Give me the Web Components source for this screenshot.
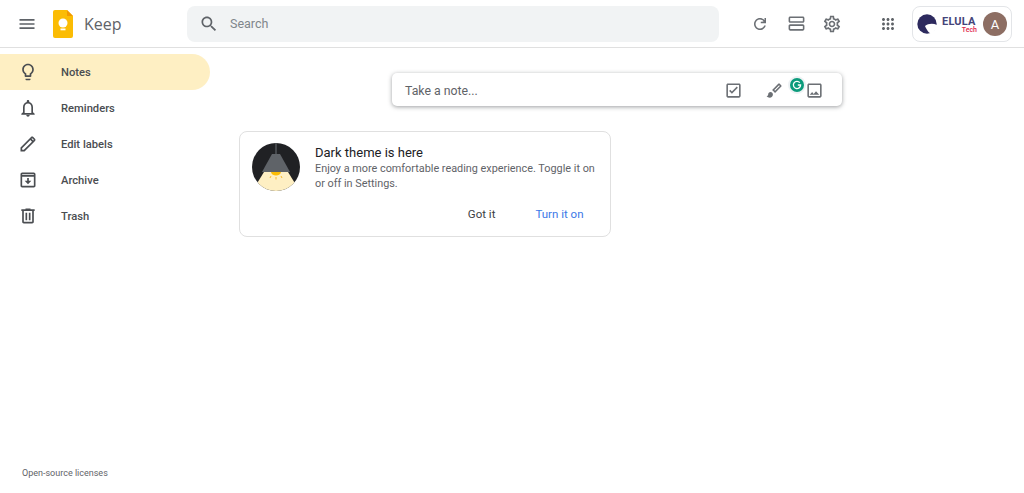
<!DOCTYPE html>
<html>
<head>
<meta charset="utf-8">
<title>Keep</title>
<style>
  html, body { margin: 0; height: 100%; background: #fff; }
  body { font-family: Roboto, "Liberation Sans", sans-serif; overflow: hidden; }
</style>
</head>
<body>
<keep-app>
  <keep-header slot="header"></keep-header>
  <keep-sidebar slot="side">
    <nav-item label="Notes" icon="bulb" active></nav-item>
    <nav-item label="Reminders" icon="bell"></nav-item>
    <nav-item label="Edit labels" icon="pencil"></nav-item>
    <nav-item label="Archive" icon="archive"></nav-item>
    <nav-item label="Trash" icon="trash"></nav-item>
  </keep-sidebar>
  <note-bar></note-bar>
  <theme-card></theme-card>
</keep-app>

<script>
const ICONS = {
  bulb: '<path d="M9 21c0 .5.4 1 1 1h4c.6 0 1-.5 1-1v-1H9v1zm3-19C8.100 2 5 5.100 5 9c0 2.400 1.200 4.500 3 5.700V17c0 .5.4 1 1 1h6c.6 0 1-.5 1-1v-2.300c1.800-1.300 3-3.400 3-5.700 0-3.900-3.100-7-7-7zm2.900 11.100-.9.6V16h-4v-2.300l-.9-.6C7.800 12.200 7 10.700 7 9c0-2.800 2.200-5 5-5s5 2.200 5 5c0 1.700-.8 3.200-2.100 4.100z"/>',
  bell: '<path d="M18 17v-6c0-3.100-1.600-5.600-4.500-6.300V4c0-.8-.7-1.500-1.500-1.500s-1.500.7-1.500 1.500v.7C7.600 5.400 6 7.900 6 11v6l-2 2v1h16v-1l-2-2zm-2 1H8v-7c0-2.500 1.500-4.500 4-4.500s4 2 4 4.500v7zm-4 4.500c1.100 0 2-.9 2-2h-4c0 1.100.9 2 2 2z"/>',
  pencil: '<path d="M20.400 5.600 18.400 3.600c-.8-.8-2-.8-2.800 0L3 16.200V21h4.800L20.400 8.400c.8-.8.8-2 0-2.800zM7 19H5v-2L14.800 7.200l2 2L7 19zM18.200 7.800l-2-2L17 5l2 2-.8.8z"/>',
  archive: '<path d="M19 3H5c-1.100 0-2 .9-2 2v14c0 1.100.9 2 2 2h14c1.100 0 2-.9 2-2V5c0-1.100-.9-2-2-2zm0 16H5V8h14v11zM5 6V5h14v1H5zm6 3.500v3.500H8l4 4 4-4h-3V9.500h-2z"/>',
  trash: '<path d="M15 4V3H9v1H4v2h1v13c0 1.100.9 2 2 2h10c1.100 0 2-.9 2-2V6h1V4h-5zm2 15H7V6h10v13zM9 8h2v9H9V8zm4 0h2v9h-2V8z"/>',
  menu: '<path d="M3 18h18v-2H3v2zm0-5h18v-2H3v2zm0-7v2h18V6H3z"/>',
  search: '<path d="M15.500 14h-.8l-.3-.3c1-1.100 1.600-2.600 1.600-4.200C16 5.900 13.100 3 9.500 3S3 5.900 3 9.500 5.900 16 9.500 16c1.600 0 3.100-.6 4.200-1.600l.3.3v.8l5 5 1.500-1.500-5-5zm-6 0C7 14 5 12 5 9.500S7 5 9.500 5 14 7 14 9.500 12 14 9.500 14z"/>',
  refresh: '<path d="M13 9v2h7V4h-2v2.900C16.500 5.100 14.400 4 12 4c-4.400 0-8 3.600-8 8s3.600 8 8 8c3.700 0 6.800-2.500 7.700-6h-2.100c-.8 2.300-3 4-5.600 4-3.300 0-6-2.700-6-6s2.700-6 6-6c2 0 3.700 1 4.800 2.500L13 9z"/>',
  rows: '<path d="M20 3H4c-1.100 0-2 .9-2 2v4c0 1.100.9 2 2 2h16c1.100 0 2-.9 2-2V5c0-1.100-.9-2-2-2zm0 6H4V5h16v4zm0 4H4c-1.100 0-2 .9-2 2v4c0 1.100.9 2 2 2h16c1.100 0 2-.9 2-2v-4c0-1.100-.9-2-2-2zm0 6H4v-4h16v4z"/>',
  gear: '<path d="M19.430 12.980c.04-.32.07-.64.07-.98 0-.34-.03-.66-.07-.98l2.110-1.650c.19-.15.24-.42.12-.64l-2-3.460c-.09-.16-.26-.25-.44-.25-.06 0-.12.01-.17.03l-2.490 1c-.52-.4-1.080-.73-1.690-.98l-.38-2.650C14.460 2.180 14.250 2 14 2h-4c-.25 0-.46.18-.49.42l-.38 2.650c-.61.25-1.170.59-1.690.98l-2.490-1c-.06-.02-.12-.03-.18-.03-.17 0-.34.09-.43.25l-2 3.460c-.13.22-.07.49.12.64l2.110 1.650c-.04.32-.07.65-.07.98 0 .33.03.66.07.98l-2.110 1.650c-.19.15-.24.42-.12.64l2 3.460c.09.16.26.25.44.25.06 0 .12-.01.17-.03l2.490-1c.52.4 1.080.73 1.690.98l.38 2.650c.03.24.24.42.49.42h4c.25 0 .46-.18.49-.42l.38-2.650c.61-.25 1.170-.59 1.690-.98l2.490 1c.06.02.12.03.18.03.17 0 .34-.09.43-.25l2-3.460c.12-.22.07-.49-.12-.64l-2.110-1.650zm-1.980-1.710c.04.31.05.52.05.73 0 .21-.02.43-.05.73l-.14 1.130.89.7 1.080.84-.7 1.210-1.270-.51-1.040-.42-.9.68c-.43.32-.84.56-1.250.73l-1.060.43-.16 1.130-.2 1.350h-1.400l-.19-1.350-.16-1.130-1.060-.43c-.43-.18-.83-.41-1.230-.71l-.91-.7-1.060.43-1.270.51-.7-1.210 1.080-.84.89-.7-.14-1.130c-.03-.31-.05-.54-.05-.74s.02-.43.05-.73l.14-1.130-.89-.7-1.080-.84.7-1.210 1.270.51 1.040.42.9-.68c.43-.32.84-.56 1.250-.73l1.060-.43.16-1.130.2-1.350h1.390l.19 1.350.16 1.130 1.060.43c.43.18.83.41 1.230.71l.91.7 1.060-.43 1.270-.51.7 1.210-1.070.85-.89.7.14 1.130zM12 8c-2.210 0-4 1.790-4 4s1.790 4 4 4 4-1.790 4-4-1.790-4-4-4zm0 6c-1.100 0-2-.9-2-2s.9-2 2-2 2 .9 2 2-.9 2-2 2z"/>',
  apps: '<path d="M6 8c1.100 0 2-.9 2-2s-.9-2-2-2-2 .9-2 2 .9 2 2 2zm6 12c1.100 0 2-.9 2-2s-.9-2-2-2-2 .9-2 2 .9 2 2 2zm-6 0c1.100 0 2-.9 2-2s-.9-2-2-2-2 .9-2 2 .9 2 2 2zm0-6c1.100 0 2-.9 2-2s-.9-2-2-2-2 .9-2 2 .9 2 2 2zm6 0c1.100 0 2-.9 2-2s-.9-2-2-2-2 .9-2 2 .9 2 2 2zm4-8c0 1.100.9 2 2 2s2-.9 2-2-.9-2-2-2-2 .9-2 2zm-4 2c1.100 0 2-.9 2-2s-.9-2-2-2-2 .9-2 2 .9 2 2 2zm6 6c1.100 0 2-.9 2-2s-.9-2-2-2-2 .9-2 2 .9 2 2 2zm0 6c1.100 0 2-.9 2-2s-.9-2-2-2-2 .9-2 2 .9 2 2 2z"/>',
  check: '<path d="M19 3H5c-1.100 0-2 .9-2 2v14c0 1.100.9 2 2 2h14c1.100 0 2-.9 2-2V5c0-1.100-.9-2-2-2zm0 16H5V5h14v14zM17.500 8.500l-1.400-1.400-6.100 6.100-2.100-2.100-1.400 1.400 3.500 3.500 7.500-7.500z"/>',
  brush: '<path d="M20.700 5.600 18.400 3.300c-.4-.4-1-.4-1.400 0l-8 8 3.700 3.700 8-8c.4-.4.400-1 0-1.400zM12.700 12.200l-.9-.9 6-6 .9.9-6 6zM7 14c-1.700 0-3 1.300-3 3 0 1.300-1.200 2-2 2 .9 1.200 2.500 2 4 2 2.200 0 4-1.800 4-4 0-1.700-1.300-3-3-3z"/>',
  image: '<path d="M19 3H5c-1.100 0-2 .9-2 2v14c0 1.100.9 2 2 2h14c1.100 0 2-.9 2-2V5c0-1.100-.9-2-2-2zm0 16H5V5h14v14zM13.900 12.900 11 16.500 9 14l-3 3.500h12l-4.100-4.600z"/>'
};

function svgIcon(name, size, color) {
  return `<svg xmlns="http://www.w3.org/2000/svg" viewBox="0 0 24 24" width="${size}" height="${size}" fill="${color}" style="display:block">${ICONS[name]}</svg>`;
}

class KeepApp extends HTMLElement {
  constructor() {
    super();
    this.attachShadow({ mode: 'open' }).innerHTML = `
      <style>
        :host { display: flex; flex-direction: column; height: 493px; }
        .body { flex: 1; display: flex; min-height: 0; }
        main { flex: 1; display: flex; flex-direction: column; padding: 25px 0 0 29px; gap: 25px; }
      </style>
      <slot name="header"></slot>
      <div class="body">
        <slot name="side"></slot>
        <main><slot></slot></main>
      </div>`;
  }
}

class KeepHeader extends HTMLElement {
  constructor() {
    super();
    this.attachShadow({ mode: 'open' }).innerHTML = `
      <style>
        :host { display: flex; align-items: center; height: 47px; border-bottom: 1px solid #e0e0e0; box-sizing: content-box; }
        .menu { margin-left: 17px; width: 20px; }
        .logo { margin-left: 16px; width: 20px; height: 28px; }
        .name { margin-left: 11px; width: 103px; font-size: 16px; color: #5f6368; font-family: "Open Sans", Roboto, sans-serif; }
        .search { width: 532px; height: 36px; margin-top: 1px; background: #f1f3f4; border-radius: 8px; display: flex; align-items: center; box-sizing: border-box; padding-left: 12px; }
        .search span { margin: 0 0 2px 11px; font-size: 12.500px; color: #80868b; }
        .tools { display: flex; align-items: center; margin-left: 31px; gap: 16px; }
        .tools > * { width: 20px; display: flex; justify-content: center; }
        .apps { margin-left: 37px; width: 18px; }
        .account { margin-left: 15px; width: 100px; height: 36px; margin-top: 1px; box-sizing: border-box; border: 1px solid #e3e5e8; border-radius: 8px; display: flex; align-items: center; padding-left: 4px; }
        .brand { margin-left: 5px; width: 38px; display: flex; flex-direction: column; font-weight: 700; font-size: 11px; line-height: 10px; color: #45457a; letter-spacing: .2px; position: relative; top: 1px; }
        .brand small { align-self: flex-end; font-size: 7px; line-height: 6px; font-weight: 500; color: #e0244a; margin-right: 3px; letter-spacing: 0; }
        .avatar { margin-left: 3px; width: 24px; height: 24px; border-radius: 50%; background: #8d6e63; color: #fff; font-size: 13px; display: flex; align-items: center; justify-content: center; }
      </style>
      <div class="menu">${svgIcon('menu', 20, '#5f6368')}</div>
      <svg class="logo" viewBox="0 0 20 28">
        <path d="M2 0h12l6 6v20a2 2 0 0 1-2 2H2a2 2 0 0 1-2-2V2a2 2 0 0 1 2-2z" fill="#fbbc04"/>
        <path d="M14 0l6 6h-6z" fill="#f29900"/>
        <circle cx="10" cy="13" r="4.500" fill="#fff"/>
        <rect x="7.500" y="18.500" width="5" height="1.800" fill="#fff"/>
      </svg>
      <span class="name">Keep</span>
      <div class="search">${svgIcon('search', 20, '#5f6368')}<span>Search</span></div>
      <div class="tools">
        <div>${svgIcon('refresh', 18, '#6b6f74')}</div>
        <div>${svgIcon('rows', 19, '#6b6f74')}</div>
        <div>${svgIcon('gear', 20, '#6b6f74')}</div>
      </div>
      <div class="apps">${svgIcon('apps', 18, '#5f6368')}</div>
      <div class="account">
        <svg width="20" height="20" viewBox="0 0 20 20">
          <circle cx="10" cy="10" r="9.700" fill="#2d2a5e"/>
          <path d="M8 12c3-2.500 8-3 12-1v3l-5 6c-2 0-5-3-7-8z" fill="#fff"/>
        </svg>
        <div class="brand">ELULA<small>Tech</small></div>
        <div class="avatar">A</div>
      </div>`;
  }
}

class KeepSidebar extends HTMLElement {
  constructor() {
    super();
    this.attachShadow({ mode: 'open' }).innerHTML = `
      <style>
        :host { display: flex; flex-direction: column; width: 210px; flex: none; padding-top: 6px; box-sizing: border-box; }
        footer { margin-top: auto; padding: 0 0 14px 22px; font-size: 9px; line-height: 11px; color: #5f6368; }
      </style>
      <slot></slot>
      <footer>Open-source licenses</footer>`;
  }
}

class NavItem extends HTMLElement {
  constructor() {
    super();
    this.attachShadow({ mode: 'open' }).innerHTML = `
      <style>
        :host { display: flex; align-items: center; height: 36px; padding-left: 18px; border-radius: 0 18px 18px 0; font-size: 11.200px; font-weight: 500; color: #4a4d51; }
        :host([active]) { background: #feefc3; }
        span { margin-left: 23px; }
      </style>
      ${svgIcon(this.getAttribute('icon'), 20, '#4a4d51')}
      <span>${this.getAttribute('label')}</span>`;
  }
}

class NoteBar extends HTMLElement {
  constructor() {
    super();
    this.attachShadow({ mode: 'open' }).innerHTML = `
      <style>
        :host { display: flex; align-items: center; position: relative; box-sizing: border-box; width: 450px; height: 33px; margin-left: 153px; padding: 1px 18px 0 13px; border-radius: 5px; background: #fff; box-shadow: 0 1px 4px rgba(60,64,67,.5); font-size: 12.300px; color: #5f6368; }
        .text { flex: 1; padding-top: 1px; }
        .tools { display: flex; align-items: center; }
        .check { width: 41px; }
        .brush { width: 40px; }
        .image { width: 19px; }
        .badge { position: absolute; left: 398px; top: 5px; width: 14px; height: 14px; border-radius: 50%; background: #0b9b7b; box-shadow: 0 0 0 2px #eef2f4; }
        .badge svg { display: block; }
      </style>
      <span class="text">Take a note...</span>
      <div class="tools">
        <div class="check">${svgIcon('check', 19, '#6b6f74')}</div>
        <div class="brush">${svgIcon('brush', 19, '#6b6f74')}</div>
        <div class="image">${svgIcon('image', 19, '#6b6f74')}</div>
      </div>
      <div class="badge">
        <svg width="14" height="14" viewBox="0 0 14 14" fill="none" stroke="#fff" stroke-width="1.300">
          <path d="M9.800 4.700A3.600 3.600 0 1 0 10.600 7H7.800"/>
        </svg>
      </div>`;
  }
}

class ThemeCard extends HTMLElement {
  constructor() {
    super();
    this.attachShadow({ mode: 'open' }).innerHTML = `
      <style>
        :host { display: block; box-sizing: border-box; width: 372px; height: 106px; border: 1px solid #e0e0e0; border-radius: 8px; padding: 11px 12px 0; }
        .top { display: flex; gap: 15px; }
        svg { flex: none; }
        h3 { margin: 2px 0 0; font-size: 13px; line-height: 16px; font-weight: 400; color: #202124; }
        p { margin: 0; font-size: 10.850px; line-height: 15px; color: #5f6368; }
        .actions { display: flex; justify-content: flex-end; gap: 40px; margin-top: 16px; padding-right: 14.500px; font-size: 11.500px; line-height: 14px; color: #3c4043; }
        .on { color: #3b78e7; }
      </style>
      <div class="top">
        <svg width="48" height="48" viewBox="0 0 48 48">
          <defs><clipPath id="c"><circle cx="24" cy="24" r="24"/></clipPath></defs>
          <g clip-path="url(#c)">
            <rect width="48" height="48" fill="#202124"/>
            <path d="M12 29 L-1 50 H49 L36 29z" fill="#feefc3"/>
            <rect x="23.400" y="0" width="1.200" height="12" fill="#5f6368"/>
            <path d="M20 11h8l10 18H10z" fill="#5f6368"/>
            <path d="M19 29h10a5 3.500 0 0 1-10 0z" fill="#fbbc04"/>
            <path d="M24 34v2.500M19 33l-1 2M29 33l1 2" stroke="#f9ab00" stroke-width=".8"/>
          </g>
        </svg>
        <div>
          <h3>Dark theme is here</h3>
          <p>Enjoy a more comfortable reading experience. Toggle it on or off in Settings.</p>
        </div>
      </div>
      <div class="actions"><span>Got it</span><span class="on">Turn it on</span></div>`;
  }
}

customElements.define('keep-app', KeepApp);
customElements.define('keep-header', KeepHeader);
customElements.define('keep-sidebar', KeepSidebar);
customElements.define('nav-item', NavItem);
customElements.define('note-bar', NoteBar);
customElements.define('theme-card', ThemeCard);
</script>
</body>
</html>
